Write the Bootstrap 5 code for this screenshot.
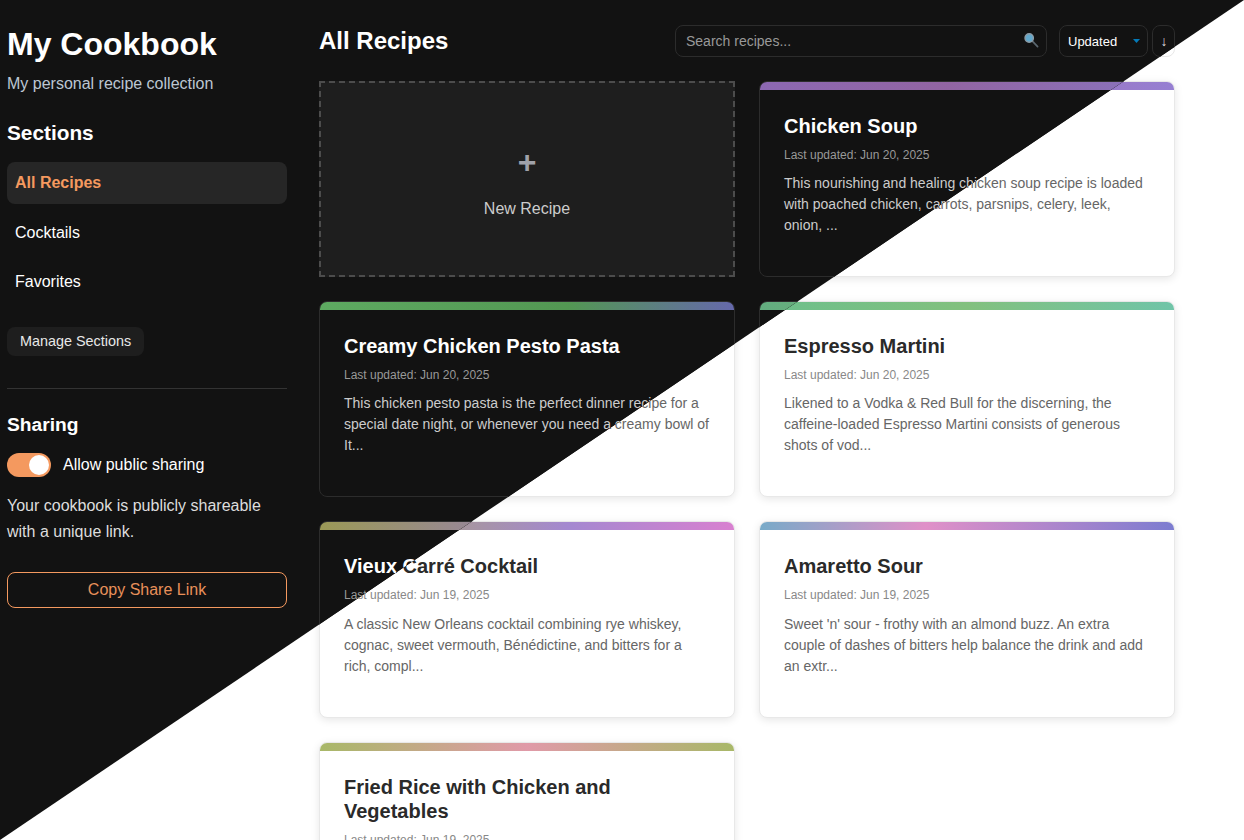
<!DOCTYPE html>
<html lang="en">
<head>
  <meta charset="UTF-8">
  <meta name="viewport" content="width=device-width, initial-scale=1.0">
  <title>My Cookbook</title>
  <link href="https://cdn.jsdelivr.net/npm/bootstrap@5.3.0/dist/css/bootstrap.min.css" rel="stylesheet">
  <style>
    html, body { height: 100%; overflow: hidden; background: #fff; }
    body { font-family: "Liberation Sans", Arial, sans-serif; }

    /* colours for the two themes, the dark one is a clipped copy on top */
    .cb-app {
      --bg: #fff; --text: #2a2a2a; --muted: #888; --body-text: #666; --line: #e8e8e8;
      --soft: #f5f5f5; --bar-fade: 1; --plus: #777; --dash: #ccc; --accent: #f4995f;
      --shadow: 0 2px 8px rgba(0, 0, 0, .1);
      color: var(--text); background: var(--bg);
      width: 1244px; height: 840px; overflow: hidden;
      padding-left: 7px; gap: 32px;
    }
    .cb-dark {
      --bg: #121212; --text: #fff; --muted: #999; --body-text: #ccc; --line: #2c2c2c;
      --soft: #1e1e1e; --plus: #a0a2aa; --dash: #4c4c4c; --shadow: none; --bar-fade: .9;
      position: absolute; top: 0; left: 0;
      clip-path: polygon(0 0, 100% 0, 0 100%);
    }

    .cb-side { width: 280px; flex: none; padding-top: 25px; }
    .cb-title { font-size: 32px; font-weight: 700; line-height: 38px; margin: 0 0 9px; }
    .cb-tagline { font-size: 16px; line-height: 24px; color: #bcc6d2; margin: 0 0 24px; }
    .cb-side-head { font-size: 20.8px; font-weight: 700; line-height: 26px; margin: 0 0 16px; }
    .cb-side-head.cb-small { font-size: 19.2px; margin-bottom: 15px; }
    .cb-sections .nav-link { height: 42px; padding: 9px 8px; margin-bottom: 7px; border-radius: 8px; color: var(--text); font-size: 16px; }
    .cb-sections .nav-link.active { background: #262626; color: var(--accent); font-weight: 700; margin-bottom: 8px; }
    .cb-manage { background: var(--soft); color: #e8e8e8; font-size: 14.4px; line-height: 17px; padding: 6px 13px; border: 0; border-radius: 8px; margin-top: 17px; }
    .cb-rule { border-top: 1px solid #333; opacity: 1; margin: 32px 0 23px; }
    .form-switch .cb-switch { width: 44px; height: 24px; flex: none; margin: 0; border: 0; cursor: pointer; }
    .form-switch .cb-switch:checked { background-color: var(--accent); background-image: url("data:image/svg+xml,<svg xmlns='http://www.w3.org/2000/svg' viewBox='-12 -12 24 24'><circle r='10' fill='%23fff'/></svg>"); background-size: 24px 24px; background-position: right center; }
    .cb-note { font-size: 16px; line-height: 26px; color: #ddd; margin: 16px 0 27px; }
    .cb-copy { width: 100%; height: 36px; font-size: 16px; line-height: 20px; padding: 6px; color: #e8905a; border: 1px solid var(--accent); border-radius: 8px; background: transparent; }

    .cb-main { width: 856px; flex: none; padding-top: 25px; }
    .cb-head { height: 32px; margin-bottom: 23.6px; }
    .cb-head h2 { font-size: 24px; font-weight: 700; line-height: 30px; margin: 0; }
    .cb-search { width: 372px; margin-left: auto; margin-right: 12px; }
    .cb-search input { height: 32px; padding: 4px 36px 4px 10px; font-size: 14px; background: var(--bg); color: var(--text); border: 1px solid var(--line); border-radius: 8px; }
    .cb-search input::placeholder { color: #999; opacity: 1; }
    .cb-search svg { position: absolute; right: 8px; top: 8px; }
    .cb-select { width: 89px; height: 32px; padding: 5px 8px 4px; font-size: 13px; color: var(--text); background-color: var(--bg); border: 1px solid var(--line); border-radius: 8px; margin-right: 4px; background-image: url("data:image/svg+xml,<svg xmlns='http://www.w3.org/2000/svg' viewBox='0 0 7 4'><path d='M0 0h7L3.5 4z' fill='%23047ab8'/></svg>"); background-size: 7px 4px; background-position: right 7px center; }
    .cb-sort { width: 23px; height: 32px; padding: 1px 0 0 1px; font-size: 14px; color: #ddd; background: var(--bg); border: 1px solid var(--line); border-radius: 8px; }

    .cb-grid { display: grid; grid-template-columns: 416px 416px; gap: 24px; grid-auto-rows: 196.4px; }
    .cb-new { background: var(--soft); border: 2px dashed var(--dash); border-radius: 0; padding-top: 5px; }
    .cb-plus { font-size: 32px; font-weight: 700; line-height: 36px; color: var(--plus); margin-bottom: 19px; }
    .cb-new-label { font-size: 16px; line-height: 20px; color: var(--body-text); }
    .cb-recipe { background: var(--bg); border: 1px solid var(--line); border-radius: 8px; box-shadow: var(--shadow); overflow: hidden; }
    .cb-bar { height: 8px; opacity: var(--bar-fade); }
    .cb-recipe-body { padding: 24px; }
    .cb-recipe h3 { font-size: 20px; font-weight: 700; line-height: 24px; margin: 0 0 8px; color: var(--text); }
    .cb-date { font-size: 12px; line-height: 18px; color: var(--muted); margin-bottom: 9.2px; }
    .cb-desc { font-size: 14px; line-height: 21px; color: var(--body-text); margin: 0; }
  </style>
</head>
<body>

<div class="cb-app d-flex" id="app">
  <aside class="cb-side">
    <h1 class="cb-title">My Cookbook</h1>
    <p class="cb-tagline">My personal recipe collection</p>
    <h4 class="cb-side-head">Sections</h4>
    <nav class="nav flex-column cb-sections">
      <a class="nav-link active" href="#">All Recipes</a>
      <a class="nav-link" href="#">Cocktails</a>
      <a class="nav-link" href="#">Favorites</a>
    </nav>
    <button class="btn cb-manage" type="button">Manage Sections</button>
    <hr class="cb-rule">
    <h4 class="cb-side-head cb-small">Sharing</h4>
    <div class="form-check form-switch d-flex align-items-center gap-2 p-0 m-0">
      <input class="form-check-input cb-switch" type="checkbox" role="switch" checked>
      <label class="form-check-label ms-1">Allow public sharing</label>
    </div>
    <p class="cb-note">Your cookbook is publicly shareable with a unique link.</p>
    <button class="btn cb-copy" type="button">Copy Share Link</button>
  </aside>

  <main class="cb-main">
    <div class="cb-head d-flex align-items-center">
      <h2>All Recipes</h2>
      <div class="cb-search position-relative">
        <input class="form-control" type="text" placeholder="Search recipes...">
        <svg width="15" height="15" viewBox="0 0 15 15" aria-hidden="true">
          <path d="M8.4 8.2l5.2 5.4" stroke="#5a666e" stroke-width="1.7" stroke-linecap="round"/>
          <circle cx="5.2" cy="5" r="4.2" fill="#62a8cc" stroke="#8c9ca6" stroke-width="1.4"/>
        </svg>
      </div>
      <select class="form-select cb-select"><option>Updated</option></select>
      <button class="btn cb-sort" type="button">↓</button>
    </div>
    <div class="cb-grid" id="grid"></div>
  </main>
</div>

<script>
  const recipes = [
    { title: 'Chicken Soup', date: 'Jun 20, 2025', bar: '#9a72c4, #a06eb2 45%, #967fd2',
      desc: 'This nourishing and healing chicken soup recipe is loaded with poached chicken, carrots, parsnips, celery, leek, onion, ...' },
    { title: 'Creamy Chicken Pesto Pasta', date: 'Jun 20, 2025', bar: '#66bb6a, #5aa65a 60%, #6f72bc',
      desc: 'This chicken pesto pasta is the perfect dinner recipe for a special date night, or whenever you need a creamy bowl of It...' },
    { title: 'Espresso Martini', date: 'Jun 20, 2025', bar: '#6cbf8c, #82c07e 50%, #70c4a8',
      desc: 'Likened to a Vodka &amp; Red Bull for the discerning, the caffeine-loaded Espresso Martini consists of generous shots of vod...' },
    { title: 'Vieux Carré Cocktail', date: 'Jun 19, 2025', bar: '#aaa85e, #a488d0 60%, #d880d0',
      desc: 'A classic New Orleans cocktail combining rye whiskey, cognac, sweet vermouth, Bénédictine, and bitters for a rich, compl...' },
    { title: 'Amaretto Sour', date: 'Jun 19, 2025', bar: '#78aac8, #e090c8 40%, #7c7cd0',
      desc: "Sweet 'n' sour - frothy with an almond buzz. An extra couple of dashes of bitters help balance the drink and add an extr..." },
    { title: 'Fried Rice with Chicken and Vegetables', date: 'Jun 19, 2025', bar: '#a8b868, #e09aa8 50%, #a8b868',
      desc: 'A quick and easy weeknight fried rice with chicken and plenty of vegetables.' }
  ];

  document.getElementById('grid').innerHTML = `
    <a class="cb-new d-flex flex-column align-items-center justify-content-center text-decoration-none" href="#">
      <div class="cb-plus">+</div>
      <div class="cb-new-label">New Recipe</div>
    </a>` + recipes.map(r => `
    <div class="cb-recipe">
      <div class="cb-bar" style="background: linear-gradient(90deg, ${r.bar})"></div>
      <div class="cb-recipe-body">
        <h3>${r.title}</h3>
        <div class="cb-date">Last updated: ${r.date}</div>
        <p class="cb-desc">${r.desc}</p>
      </div>
    </div>`).join('');

  // Dark theme is the same page again, clipped along the diagonal
  const app = document.getElementById('app');
  const dark = app.cloneNode(true);
  dark.removeAttribute('id');
  dark.querySelector('#grid').removeAttribute('id');
  dark.classList.add('cb-dark');
  document.body.appendChild(dark);
</script>

<script src="https://cdn.jsdelivr.net/npm/bootstrap@5.3.0/dist/js/bootstrap.bundle.min.js"></script>
</body>
</html>
